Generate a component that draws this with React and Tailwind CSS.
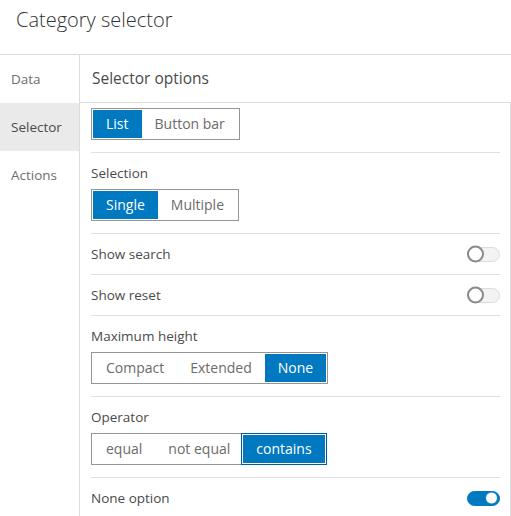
import React, { useState } from 'react';

const font = { fontFamily: '"Open Sans", "Noto Sans", sans-serif' };

function Segmented({ options, value, onChange, focused }) {
  return (
    <div className="inline-flex border border-[#959595] p-px bg-white">
      {options.map((opt) => {
        const active = opt === value;
        return (
          <button
            key={opt}
            onClick={() => onChange(opt)}
            className={`h-[28px] px-[13px] text-[14px] leading-none ${
              active
                ? `bg-[#0079c1] text-white ${focused ? 'outline outline-1 outline-[#005e95] outline-offset-[1px]' : ''}`
                : 'bg-white text-[#6b6b6b]'
            }`}
          >
            {opt}
          </button>
        );
      })}
    </div>
  );
}

function Toggle({ on, onChange }) {
  return (
    <button
      onClick={() => onChange(!on)}
      className={`relative w-[33px] h-[15px] rounded-full border ${
        on ? 'bg-[#0079c1] border-[#0079c1]' : 'bg-[#f3f3f3] border-[#dcdcdc]'
      }`}
    >
      <span
        className={`absolute top-1/2 -translate-y-1/2 rounded-full bg-white ${
          on
            ? 'right-[1px] w-[13px] h-[13px] border border-[#0079c1]'
            : 'left-[-1px] w-[17px] h-[17px] border-2 border-[#8a8a8a]'
        }`}
      />
    </button>
  );
}

export default function App() {
  const [tab, setTab] = useState('Selector');
  const [layout, setLayout] = useState('List');
  const [selection, setSelection] = useState('Single');
  const [search, setSearch] = useState(false);
  const [reset, setReset] = useState(false);
  const [height, setHeight] = useState('None');
  const [operator, setOperator] = useState('contains');
  const [noneOption, setNoneOption] = useState(true);

  return (
    <div className="w-[511px] h-[516px] bg-white flex flex-col overflow-hidden text-[#323232]" style={font}>
      {/* Header */}
      <div className="h-[55px] shrink-0 border-b border-[#dcdcdc] pl-4 pt-[8px]">
        <h2 className="text-[20px] leading-[24px] font-light text-[#323232]">Category selector</h2>
      </div>

      <div className="flex flex-1 min-h-0">
        {/* Side tabs */}
        <div className="w-[80px] shrink-0 border-r border-[#dcdcdc] flex flex-col">
          {['Data', 'Selector', 'Actions'].map((t) => (
            <button
              key={t}
              onClick={() => setTab(t)}
              className={`h-[48px] text-left pl-[11px] text-[13.5px] ${
                tab === t ? 'bg-[#eaeaea] text-[#4a4a4a]' : 'text-[#6e6e6e]'
              }`}
            >
              {t}
            </button>
          ))}
        </div>

        {/* Panel */}
        <div className="flex-1 flex flex-col min-w-0">
          <div className="h-[48px] shrink-0 border-b border-[#dcdcdc] flex items-center pl-3">
            <h3 className="text-[15.5px] font-medium text-[#4a4a4a]">Selector options</h3>
          </div>

          <div className="flex-1 border-r border-[#dcdcdc] pl-[11px] pr-[10px] text-[13.5px] text-[#4a4a4a]">
            <div className="pt-[5px] pb-[12px] border-b border-[#e0e0e0]">
              <Segmented options={['List', 'Button bar']} value={layout} onChange={setLayout} />
            </div>

            <div className="pt-[10px] pb-[12px] border-b border-[#e0e0e0]">
              <div className="leading-[20px] mb-[6px]">Selection</div>
              <Segmented options={['Single', 'Multiple']} value={selection} onChange={setSelection} />
            </div>

            <div className="h-[41px] flex items-center justify-between border-b border-[#e0e0e0]">
              <span>Show search</span>
              <Toggle on={search} onChange={setSearch} />
            </div>

            <div className="h-[41px] flex items-center justify-between border-b border-[#e0e0e0]">
              <span>Show reset</span>
              <Toggle on={reset} onChange={setReset} />
            </div>

            <div className="pt-[10px] pb-[12px] border-b border-[#e0e0e0]">
              <div className="leading-[20px] mb-[6px]">Maximum height</div>
              <Segmented options={['Compact', 'Extended', 'None']} value={height} onChange={setHeight} />
            </div>

            <div className="pt-[10px] pb-[12px] border-b border-[#e0e0e0]">
              <div className="leading-[20px] mb-[6px]">Operator</div>
              <Segmented
                options={['equal', 'not equal', 'contains']}
                value={operator}
                onChange={setOperator}
                focused
              />
            </div>

            <div className="h-[40px] flex items-center justify-between">
              <span>None option</span>
              <Toggle on={noneOption} onChange={setNoneOption} />
            </div>
          </div>
        </div>
      </div>
    </div>
  );
}
